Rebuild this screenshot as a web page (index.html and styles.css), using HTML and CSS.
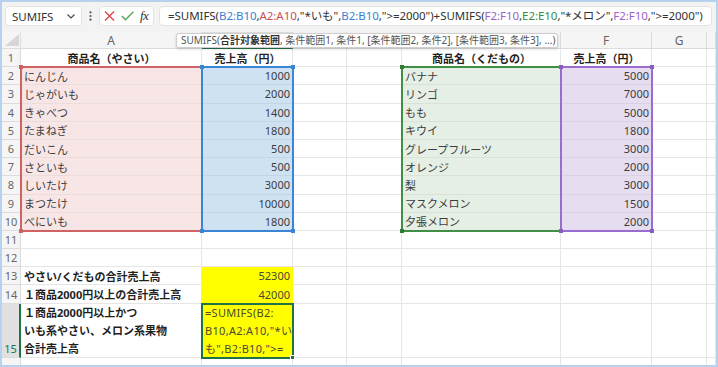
FILE: index.html
```html
<!DOCTYPE html>
<html lang="ja">
<head>
<meta charset="utf-8">
<title>SUMIFS</title>
<link rel="stylesheet" href="styles.css">
</head>
<body>
<div class="frame">
  <div class="toolbar">
    <div class="namebox"><span>SUMIFS</span>
      <svg class="chev" width="8" height="5" viewBox="0 0 8 5"><polyline points="0.5,0.5 4,4 7.5,0.5" fill="none" stroke="#444" stroke-width="1.1"/></svg>
    </div>
    <div class="kebab"><svg width="3" height="10" viewBox="0 0 3 10"><circle cx="1.5" cy="1.3" r="1.1" fill="#555"/><circle cx="1.5" cy="5" r="1.1" fill="#555"/><circle cx="1.5" cy="8.7" r="1.1" fill="#555"/></svg></div>
    <div class="fxbox">
      <svg width="11" height="10" viewBox="0 0 11 10"><path d="M1 0.5 L10 9.5 M10 0.5 L1 9.5" stroke="#e0464b" stroke-width="1.4" fill="none"/></svg>
      <svg width="13" height="10" viewBox="0 0 13 10"><polyline points="0.8,5 4.5,8.8 12.3,0.8" stroke="#5aa55c" stroke-width="1.4" fill="none"/></svg>
      <span class="fx">fx</span>
    </div>
    <div class="formula">=SUMIFS(<span class="rb">B2:B10</span>,<span class="rr">A2:A10</span>,"*いも",<span class="rb">B2:B10</span>,"&gt;=2000")+SUMIFS(<span class="rp">F2:F10</span>,<span class="rg">E2:E10</span>,"*メロン",<span class="rp">F2:F10</span>,"&gt;=2000")</div>
  </div>
  <div class="sheet">
    <div class="grid">
      <div class="corner"><svg width="14" height="12" viewBox="0 0 14 12"><polygon points="14,0 14,12 0,12" fill="#d6d6d6"/></svg></div>
      <div class="ch">A</div><div class="ch sel"></div><div class="ch"></div><div class="ch"></div><div class="ch"></div><div class="ch">F</div><div class="ch">G</div><div class="ch"></div>

      <div class="rh">1</div><div class="c b ctr">商品名（やさい）</div><div class="c b ctr">売上高（円）</div><div class="c"></div><div class="c"></div><div class="c b ctr">商品名（くだもの）</div><div class="c b ctr">売上高（円）</div><div class="c"></div><div class="c"></div>

      <div class="rh">2</div><div class="c pk">にんじん</div><div class="c bl num">1000</div><div class="c"></div><div class="c"></div><div class="c gr">バナナ</div><div class="c pu num">5000</div><div class="c"></div><div class="c"></div>
      <div class="rh">3</div><div class="c pk">じゃがいも</div><div class="c bl num">2000</div><div class="c"></div><div class="c"></div><div class="c gr">リンゴ</div><div class="c pu num">7000</div><div class="c"></div><div class="c"></div>
      <div class="rh">4</div><div class="c pk">きゃべつ</div><div class="c bl num">1400</div><div class="c"></div><div class="c"></div><div class="c gr">もも</div><div class="c pu num">5000</div><div class="c"></div><div class="c"></div>
      <div class="rh">5</div><div class="c pk">たまねぎ</div><div class="c bl num">1800</div><div class="c"></div><div class="c"></div><div class="c gr">キウイ</div><div class="c pu num">1800</div><div class="c"></div><div class="c"></div>
      <div class="rh">6</div><div class="c pk">だいこん</div><div class="c bl num">500</div><div class="c"></div><div class="c"></div><div class="c gr">グレープフルーツ</div><div class="c pu num">3000</div><div class="c"></div><div class="c"></div>
      <div class="rh">7</div><div class="c pk">さといも</div><div class="c bl num">500</div><div class="c"></div><div class="c"></div><div class="c gr">オレンジ</div><div class="c pu num">2000</div><div class="c"></div><div class="c"></div>
      <div class="rh">8</div><div class="c pk">しいたけ</div><div class="c bl num">3000</div><div class="c"></div><div class="c"></div><div class="c gr">梨</div><div class="c pu num">3000</div><div class="c"></div><div class="c"></div>
      <div class="rh">9</div><div class="c pk">まつたけ</div><div class="c bl num">10000</div><div class="c"></div><div class="c"></div><div class="c gr">マスクメロン</div><div class="c pu num">1500</div><div class="c"></div><div class="c"></div>
      <div class="rh">10</div><div class="c pk">べにいも</div><div class="c bl num">1800</div><div class="c"></div><div class="c"></div><div class="c gr">夕張メロン</div><div class="c pu num">2000</div><div class="c"></div><div class="c"></div>

      <div class="rh">11</div><div class="c"></div><div class="c"></div><div class="c"></div><div class="c"></div><div class="c"></div><div class="c"></div><div class="c"></div><div class="c"></div>
      <div class="rh">12</div><div class="c"></div><div class="c"></div><div class="c"></div><div class="c"></div><div class="c"></div><div class="c"></div><div class="c"></div><div class="c"></div>
      <div class="rh">13</div><div class="c b">やさい/くだもの合計売上高</div><div class="c ye num">52300</div><div class="c"></div><div class="c"></div><div class="c"></div><div class="c"></div><div class="c"></div><div class="c"></div>
      <div class="rh">14</div><div class="c b">１商品2000円以上の合計売上高</div><div class="c ye num">42000</div><div class="c"></div><div class="c"></div><div class="c"></div><div class="c"></div><div class="c"></div><div class="c"></div>
      <div class="rh act">15</div>
      <div class="c b wrap"><span>１商品2000円以上かつ</span><span>いも系やさい、メロン系果物</span><span>合計売上高</span></div>
      <div class="c ye edit"><span>=SUMIFS(B2:</span><span>B10,A2:A10,"*い</span><span>も",B2:B10,"&gt;=</span></div>
      <div class="c"></div><div class="c"></div><div class="c"></div><div class="c"></div><div class="c"></div><div class="c"></div>
      <div class="rh last"></div><div class="c"></div><div class="c"></div><div class="c"></div><div class="c"></div><div class="c"></div><div class="c"></div><div class="c"></div><div class="c"></div>
    </div>
    <div class="marks">
      <div class="rng red"><i class="h tl"></i><i class="h tr"></i><i class="h bl2"></i><i class="h br"></i></div>
      <div class="rng blue"><i class="h tl"></i><i class="h tr"></i><i class="h bl2"></i><i class="h br"></i></div>
      <div class="rng green"><i class="h tl"></i><i class="h tr"></i><i class="h bl2"></i><i class="h br"></i></div>
      <div class="rng purple"><i class="h tl"></i><i class="h tr"></i><i class="h bl2"></i><i class="h br"></i></div>
      <div class="active"><i class="fill"></i></div>
    </div>
    <div class="tip">SUMIFS(<b>合計対象範囲</b>, 条件範囲1, 条件1, [条件範囲2, 条件2], [条件範囲3, 条件3], ...)</div>
  </div>
</div>
</body>
</html>
```

FILE: styles.css
```css
* { box-sizing: border-box; margin: 0; padding: 0; }
html, body { width: 718px; height: 367px; overflow: hidden; background: #fff; }
body { font-family: "Noto Sans", "Noto Sans CJK JP", sans-serif; color: #333; }

.frame {
  width: 718px; height: 367px;
  border: 2px solid #b6d2ef;
  display: flex; flex-direction: column;
  overflow: hidden;
}

/* formula bar */
.toolbar {
  flex: none; height: 30px;
  background: #f3f3f3;
  display: flex; align-items: flex-start;
  padding: 4px 4px 0 3px;
}
.namebox {
  width: 77px; height: 20px;
  background: #fff; border: 1px solid #e3e3e3; border-radius: 4px;
  display: flex; align-items: center; justify-content: space-between;
  padding: 0 6px 0 6px;
  font-size: 11.5px; color: #333;
}
.kebab { width: 17px; height: 20px; display: flex; align-items: center; justify-content: center; }
.fxbox {
  width: 55px; height: 20px;
  background: #fff; border: 1px solid #e3e3e3; border-radius: 4px;
  display: flex; align-items: center; gap: 6px;
  padding-left: 4px;
}
.fx { font-family: "Liberation Serif", serif; font-style: italic; font-size: 13px; color: #333; letter-spacing: -0.5px; }
.formula {
  margin-left: 5px; flex: 1; height: 20px;
  background: #fff; border: 1px solid #e3e3e3; border-radius: 4px;
  padding-left: 8px;
  font-size: 11.5px; line-height: 18px; color: #333;
  letter-spacing: -0.05px;
  white-space: nowrap; overflow: hidden;
}
.rb { color: #3a7fd2; }
.rr { color: #c85050; }
.rp { color: #9a62c9; }
.rg { color: #3a8c3e; }

/* sheet */
.sheet { position: relative; flex: 1; overflow: hidden; }
.grid, .marks {
  display: grid;
  grid-template-columns: 19px 181px 91px 54px 55px 159px 91px 55px 1fr;
  grid-template-rows: 17px repeat(14, 18.2px) 54.6px 18px;
}
.marks { position: absolute; inset: 0; pointer-events: none; }

.corner, .ch, .rh {
  background: #f5f5f5;
  border-right: 1px solid #dcdcdc; border-bottom: 1px solid #dcdcdc;
  color: #666;
}
.corner { display: flex; align-items: flex-end; justify-content: flex-end; padding: 0 1px 2px 0; }
.ch { display: flex; align-items: center; justify-content: center; font-size: 12px; }
.ch.sel { background: #e1e1e1; border-bottom: 2px solid #217346; }
.rh { display: flex; align-items: center; justify-content: center; font-size: 11px; }
.rh.act { background: #e1e1e1; border-right: 2px solid #217346; color: #217346; align-items: flex-end; padding-bottom: 1px; }

.c {
  border-right: 1px solid #e6e6e6; border-bottom: 1px solid #e6e6e6;
  font-size: 11px; color: #3c3c3c;
  display: flex; align-items: center;
  padding: 0 2px 0 3px;
  white-space: nowrap; overflow: hidden;
}
.b { font-weight: bold; color: #1f1f1f; }
.ctr { justify-content: center; }
.num { justify-content: flex-end; }
.pk { background: #f8e6e6; border-color: #ecdcdc; }
.bl { background: #cfe2f2; border-color: #c2d6e6; }
.gr { background: #e5efe5; border-color: #d8e2d8; }
.pu { background: #e6ddf1; border-color: #dad1e5; }
.ye { background: #ffff00; border-color: #ffff00; color: #4a4a30; }

.wrap, .edit { flex-direction: column; align-items: flex-start; justify-content: flex-start; line-height: 18.2px; }
.edit { letter-spacing: 0.3px; }

/* reference ranges */
.rng { position: relative; margin: -1px; grid-row: 3 / 12; border: 2px solid; }
.red { grid-column: 2; border-color: #cf6363; }
.blue { grid-column: 3; border-color: #3a86d6; }
.green { grid-column: 6; border-color: #3f8f44; }
.purple { grid-column: 7; border-color: #9a6cd0; }
.h { position: absolute; width: 4px; height: 4px; }
.red .h { background: #cf6363; }
.blue .h { background: #3a86d6; }
.green .h { background: #2f7a34; }
.purple .h { background: #8a5cc2; }
.tl { left: -3px; top: -3px; }
.tr { right: -3px; top: -3px; }
.bl2 { left: -3px; bottom: -3px; }
.br { right: -3px; bottom: -3px; }

.active {
  position: relative; grid-column: 3; grid-row: 16;
  margin: -1px; border: 2px solid #217346;
}
.active .fill { position: absolute; right: -3px; bottom: -3px; width: 5px; height: 5px; background: #217346; border: 1px solid #fff; }

/* tooltip */
.tip {
  position: absolute; left: 174px; top: 1px;
  width: 382px; height: 15px;
  background: #fff; border: 1px solid #cfcfcf; border-radius: 3px;
  box-shadow: 0 1px 3px rgba(0,0,0,0.18);
  font-size: 10px; line-height: 13px; color: #555;
  padding-left: 4px; white-space: nowrap;
}
.tip b { color: #333; }
```
